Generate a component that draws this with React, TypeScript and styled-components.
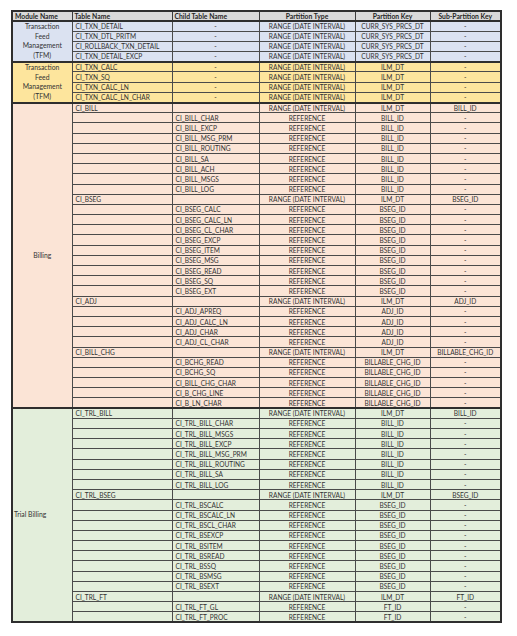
import styled, { createGlobalStyle } from "styled-components";

type Row = {
  table: string;
  child: string;
  type: string;
  pkey: string;
  sub: string;
};

type Section = {
  module: string;
  bg: string;
  align: "center" | "left";
  rows: Row[];
};

const RANGE = "RANGE (DATE INTERVAL)";
const REF = "REFERENCE";

// parent table followed by its reference children
const group = (parent: string, parentSub: string, key: string, children: string[]): Row[] => [
  { table: parent, child: "", type: RANGE, pkey: "ILM_DT", sub: parentSub },
  ...children.map((c) => ({ table: "", child: c, type: REF, pkey: key, sub: "-" })),
];

const flat = (tables: string[], key: string): Row[] =>
  tables.map((t) => ({ table: t, child: "-", type: RANGE, pkey: key, sub: "-" }));

const sections: Section[] = [
  {
    module: "Transaction Feed Management (TFM)",
    bg: "#dbe2f1",
    align: "center",
    rows: flat(
      ["CI_TXN_DETAIL", "CI_TXN_DTL_PRITM", "CI_ROLLBACK_TXN_DETAIL", "CI_TXN_DETAIL_EXCP"],
      "CURR_SYS_PRCS_DT"
    ),
  },
  {
    module: "Transaction Feed Management (TFM)",
    bg: "#fde59d",
    align: "center",
    rows: flat(["CI_TXN_CALC", "CI_TXN_SQ", "CI_TXN_CALC_LN", "CI_TXN_CALC_LN_CHAR"], "ILM_DT"),
  },
  {
    module: "Billing",
    bg: "#fbe4d6",
    align: "center",
    rows: [
      ...group("CI_BILL", "BILL_ID", "BILL_ID", [
        "CI_BILL_CHAR",
        "CI_BILL_EXCP",
        "CI_BILL_MSG_PRM",
        "CI_BILL_ROUTING",
        "CI_BILL_SA",
        "CI_BILL_ACH",
        "CI_BILL_MSGS",
        "CI_BILL_LOG",
      ]),
      ...group("CI_BSEG", "BSEG_ID", "BSEG_ID", [
        "CI_BSEG_CALC",
        "CI_BSEG_CALC_LN",
        "CI_BSEG_CL_CHAR",
        "CI_BSEG_EXCP",
        "CI_BSEG_ITEM",
        "CI_BSEG_MSG",
        "CI_BSEG_READ",
        "CI_BSEG_SQ",
        "CI_BSEG_EXT",
      ]),
      ...group("CI_ADJ", "ADJ_ID", "ADJ_ID", [
        "CI_ADJ_APREQ",
        "CI_ADJ_CALC_LN",
        "CI_ADJ_CHAR",
        "CI_ADJ_CL_CHAR",
      ]),
      ...group("CI_BILL_CHG", "BILLABLE_CHG_ID", "BILLABLE_CHG_ID", [
        "CI_BCHG_READ",
        "CI_BCHG_SQ",
        "CI_BILL_CHG_CHAR",
        "CI_B_CHG_LINE",
        "CI_B_LN_CHAR",
      ]),
    ],
  },
  {
    module: "Trial Billing",
    bg: "#e3eedb",
    align: "left",
    rows: [
      ...group("CI_TRL_BILL", "BILL_ID", "BILL_ID", [
        "CI_TRL_BILL_CHAR",
        "CI_TRL_BILL_MSGS",
        "CI_TRL_BILL_EXCP",
        "CI_TRL_BILL_MSG_PRM",
        "CI_TRL_BILL_ROUTING",
        "CI_TRL_BILL_SA",
        "CI_TRL_BILL_LOG",
      ]),
      ...group("CI_TRL_BSEG", "BSEG_ID", "BSEG_ID", [
        "CI_TRL_BSCALC",
        "CI_TRL_BSCALC_LN",
        "CI_TRL_BSCL_CHAR",
        "CI_TRL_BSEXCP",
        "CI_TRL_BSITEM",
        "CI_TRL_BSREAD",
        "CI_TRL_BSSQ",
        "CI_TRL_BSMSG",
        "CI_TRL_BSEXT",
      ]),
      ...group("CI_TRL_FT", "FT_ID", "FT_ID", ["CI_TRL_FT_GL", "CI_TRL_FT_PROC"]),
    ],
  },
];

const GlobalStyle = createGlobalStyle`
  body {
    margin: 0;
    background: #ffffff;
    font-family: Lato, "Liberation Sans", sans-serif;
  }
`;

const Page = styled.div`
  padding: 10px 0 0 11px;
`;

const Grid = styled.table`
  border-collapse: collapse;
  table-layout: fixed;
  width: 489px;
  border: 2px solid #2e2e2e;
  font-size: 6.6px;
  color: #333333;
`;

const HeadRow = styled.tr`
  height: 10px;
`;

const BodyRow = styled.tr`
  height: 10.2px;
`;

const Head = styled.th<{ $align?: string }>`
  padding: 0 2px;
  line-height: 8px;
  background: #d9d9d9;
  border: 1px solid #3c3c3c;
  border-bottom: 2px solid #2e2e2e;
  font-weight: 700;
  font-size: 6.8px;
  color: #262626;
  text-align: ${(p) => p.$align || "center"};
  white-space: nowrap;
`;

const Cell = styled.td<{ $bg: string; $align?: string; $top?: boolean }>`
  padding: 0 3px;
  line-height: 8px;
  background: ${(p) => p.$bg};
  border: 1px solid #4a4a4a;
  border-top: ${(p) => (p.$top ? "2px solid #2e2e2e" : "1px solid #4a4a4a")};
  text-align: ${(p) => p.$align || "center"};
  white-space: nowrap;
  overflow: hidden;
`;

const ModuleCell = styled.td<{ $bg: string; $align: string }>`
  padding: 0 ${(p) => (p.$align === "left" ? "1px" : "4px")};
  background: ${(p) => p.$bg};
  border: 1px solid #4a4a4a;
  border-top: 2px solid #2e2e2e;
  text-align: ${(p) => p.$align};
  vertical-align: middle;
  line-height: 9.6px;
  font-size: 6.8px;
`;

export default function App() {
  return (
    <Page>
      <GlobalStyle />
      <Grid>
        <colgroup>
          <col style={{ width: 60 }} />
          <col style={{ width: 100 }} />
          <col style={{ width: 87 }} />
          <col style={{ width: 96 }} />
          <col style={{ width: 75 }} />
          <col style={{ width: 71 }} />
        </colgroup>
        <thead>
          <HeadRow>
            <Head $align="left">Module Name</Head>
            <Head $align="left">Table Name</Head>
            <Head $align="left">Child Table Name</Head>
            <Head>Partition Type</Head>
            <Head>Partition Key</Head>
            <Head>Sub-Partition Key</Head>
          </HeadRow>
        </thead>
        <tbody>
          {sections.map((s, si) =>
            s.rows.map((r, ri) => {
              const top = ri === 0;
              return (
                <BodyRow key={`${si}-${ri}`}>
                  {top && (
                    <ModuleCell rowSpan={s.rows.length} $bg={s.bg} $align={s.align}>
                      {s.module}
                    </ModuleCell>
                  )}
                  <Cell $bg={s.bg} $align="left" $top={top}>
                    {r.table}
                  </Cell>
                  <Cell $bg={s.bg} $align={r.child === "-" ? "center" : "left"} $top={top}>
                    {r.child}
                  </Cell>
                  <Cell $bg={s.bg} $top={top}>
                    {r.type}
                  </Cell>
                  <Cell $bg={s.bg} $top={top}>
                    {r.pkey}
                  </Cell>
                  <Cell $bg={s.bg} $top={top}>
                    {r.sub}
                  </Cell>
                </BodyRow>
              );
            })
          )}
        </tbody>
      </Grid>
    </Page>
  );
}
